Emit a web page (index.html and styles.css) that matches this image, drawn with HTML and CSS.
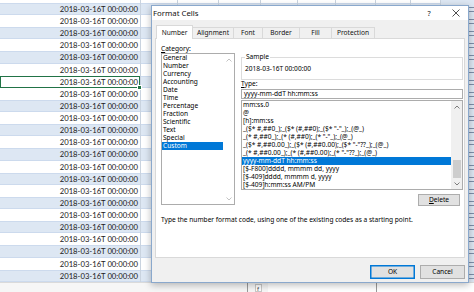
FILE: index.html
```html
<!DOCTYPE html>
<html>
<head>
<meta charset="utf-8">
<link rel="stylesheet" href="styles.css">
</head>
<body>
<div class="sheet">
  <div class="row"><div class="a"></div><div class="c w37"></div><div class="c w41"></div><div class="c w42"></div><div class="c w37"></div><div class="c w38"></div><div class="c w40"></div><div class="c w35"></div><div class="c w30"></div><div class="c last"></div></div>
  <div class="row"><div class="a">2018-03-16T 00:00:00</div><div class="c w37"></div><div class="c w41"></div><div class="c w42"></div><div class="c w37"></div><div class="c w38"></div><div class="c w40"></div><div class="c w35"></div><div class="c w30"></div><div class="c last"></div></div>
  <div class="row"><div class="a">2018-03-16T 00:00:00</div><div class="c w37"></div><div class="c w41"></div><div class="c w42"></div><div class="c w37"></div><div class="c w38"></div><div class="c w40"></div><div class="c w35"></div><div class="c w30"></div><div class="c last"></div></div>
  <div class="row"><div class="a">2018-03-16T 00:00:00</div><div class="c w37"></div><div class="c w41"></div><div class="c w42"></div><div class="c w37"></div><div class="c w38"></div><div class="c w40"></div><div class="c w35"></div><div class="c w30"></div><div class="c last"></div></div>
  <div class="row"><div class="a">2018-03-16T 00:00:00</div><div class="c w37"></div><div class="c w41"></div><div class="c w42"></div><div class="c w37"></div><div class="c w38"></div><div class="c w40"></div><div class="c w35"></div><div class="c w30"></div><div class="c last"></div></div>
  <div class="row"><div class="a">2018-03-16T 00:00:00</div><div class="c w37"></div><div class="c w41"></div><div class="c w42"></div><div class="c w37"></div><div class="c w38"></div><div class="c w40"></div><div class="c w35"></div><div class="c w30"></div><div class="c last"></div></div>
  <div class="row"><div class="a">2018-03-16T 00:00:00</div><div class="c w37"></div><div class="c w41"></div><div class="c w42"></div><div class="c w37"></div><div class="c w38"></div><div class="c w40"></div><div class="c w35"></div><div class="c w30"></div><div class="c last"></div></div>
  <div class="row active"><div class="a">2018-03-16T 00:00:00</div><div class="c w37"></div><div class="c w41"></div><div class="c w42"></div><div class="c w37"></div><div class="c w38"></div><div class="c w40"></div><div class="c w35"></div><div class="c w30"></div><div class="c last"></div></div>
  <div class="row"><div class="a">2018-03-16T 00:00:00</div><div class="c w37"></div><div class="c w41"></div><div class="c w42"></div><div class="c w37"></div><div class="c w38"></div><div class="c w40"></div><div class="c w35"></div><div class="c w30"></div><div class="c last"></div></div>
  <div class="row"><div class="a">2018-03-16T 00:00:00</div><div class="c w37"></div><div class="c w41"></div><div class="c w42"></div><div class="c w37"></div><div class="c w38"></div><div class="c w40"></div><div class="c w35"></div><div class="c w30"></div><div class="c last"></div></div>
  <div class="row"><div class="a">2018-03-16T 00:00:00</div><div class="c w37"></div><div class="c w41"></div><div class="c w42"></div><div class="c w37"></div><div class="c w38"></div><div class="c w40"></div><div class="c w35"></div><div class="c w30"></div><div class="c last"></div></div>
  <div class="row"><div class="a">2018-03-16T 00:00:00</div><div class="c w37"></div><div class="c w41"></div><div class="c w42"></div><div class="c w37"></div><div class="c w38"></div><div class="c w40"></div><div class="c w35"></div><div class="c w30"></div><div class="c last"></div></div>
  <div class="row"><div class="a">2018-03-16T 00:00:00</div><div class="c w37"></div><div class="c w41"></div><div class="c w42"></div><div class="c w37"></div><div class="c w38"></div><div class="c w40"></div><div class="c w35"></div><div class="c w30"></div><div class="c last"></div></div>
  <div class="row"><div class="a">2018-03-16T 00:00:00</div><div class="c w37"></div><div class="c w41"></div><div class="c w42"></div><div class="c w37"></div><div class="c w38"></div><div class="c w40"></div><div class="c w35"></div><div class="c w30"></div><div class="c last"></div></div>
  <div class="row"><div class="a">2018-03-16T 00:00:00</div><div class="c w37"></div><div class="c w41"></div><div class="c w42"></div><div class="c w37"></div><div class="c w38"></div><div class="c w40"></div><div class="c w35"></div><div class="c w30"></div><div class="c last"></div></div>
  <div class="row"><div class="a">2018-03-16T 00:00:00</div><div class="c w37"></div><div class="c w41"></div><div class="c w42"></div><div class="c w37"></div><div class="c w38"></div><div class="c w40"></div><div class="c w35"></div><div class="c w30"></div><div class="c last"></div></div>
  <div class="row"><div class="a">2018-03-16T 00:00:00</div><div class="c w37"></div><div class="c w41"></div><div class="c w42"></div><div class="c w37"></div><div class="c w38"></div><div class="c w40"></div><div class="c w35"></div><div class="c w30"></div><div class="c last"></div></div>
  <div class="row"><div class="a">2018-03-16T 00:00:00</div><div class="c w37"></div><div class="c w41"></div><div class="c w42"></div><div class="c w37"></div><div class="c w38"></div><div class="c w40"></div><div class="c w35"></div><div class="c w30"></div><div class="c last"></div></div>
  <div class="row"><div class="a">2018-03-16T 00:00:00</div><div class="c w37"></div><div class="c w41"></div><div class="c w42"></div><div class="c w37"></div><div class="c w38"></div><div class="c w40"></div><div class="c w35"></div><div class="c w30"></div><div class="c last"></div></div>
  <div class="row"><div class="a">2018-03-16T 00:00:00</div><div class="c w37"></div><div class="c w41"></div><div class="c w42"></div><div class="c w37"></div><div class="c w38"></div><div class="c w40"></div><div class="c w35"></div><div class="c w30"></div><div class="c last"></div></div>
  <div class="row"><div class="a">2018-03-16T 00:00:00</div><div class="c w37"></div><div class="c w41"></div><div class="c w42"></div><div class="c w37"></div><div class="c w38"></div><div class="c w40"></div><div class="c w35"></div><div class="c w30"></div><div class="c last"></div></div>
  <div class="row"><div class="a">2018-03-16T 00:00:00</div><div class="c w37"></div><div class="c w41"></div><div class="c w42"></div><div class="c w37"></div><div class="c w38"></div><div class="c w40"></div><div class="c w35"></div><div class="c w30"></div><div class="c last"></div></div>
  <div class="row"><div class="a">2018-03-16T 00:00:00</div><div class="c w37"></div><div class="c w41"></div><div class="c w42"></div><div class="c w37"></div><div class="c w38"></div><div class="c w40"></div><div class="c w35"></div><div class="c w30"></div><div class="c last"></div></div>
  <div class="row"><div class="a">2018-03-16T 00:00:00</div><div class="c w37"></div><div class="c w41"></div><div class="c w42"></div><div class="c w37"></div><div class="c w38"></div><div class="c w40"></div><div class="c w35"></div><div class="c w30"></div><div class="c last"></div></div>
  <div class="bottombar"><div class="bb-left"></div><div class="bb-tab"><span class="bb-box">f</span></div><div class="bb-mid"></div><div class="bb-right"></div></div>
</div>

<div class="dialog">
  <div class="titlebar">
    <span class="title">Format Cells</span>
    <span class="qmark">?</span>
    <span class="close"><svg width="8" height="8" viewBox="0 0 8 8"><path d="M0.5 0.5L7.5 7.5M7.5 0.5L0.5 7.5" stroke="#222" stroke-width="0.8" fill="none"/></svg></span>
  </div>
  <div class="body">
    <div class="tabs">
      <div class="tab active t-number">Number</div>
      <div class="tab t-align">Alignment</div>
      <div class="tab t-font">Font</div>
      <div class="tab t-border">Border</div>
      <div class="tab t-fill">Fill</div>
      <div class="tab t-prot">Protection</div>
    </div>
    <div class="panel">
      <div class="cols">
        <div class="leftcol">
          <div class="label"><u>C</u>ategory:</div>
          <div class="catlist">
            <div class="items">
              <div class="item">General</div>
              <div class="item">Number</div>
              <div class="item">Currency</div>
              <div class="item">Accounting</div>
              <div class="item">Date</div>
              <div class="item">Time</div>
              <div class="item">Percentage</div>
              <div class="item">Fraction</div>
              <div class="item">Scientific</div>
              <div class="item">Text</div>
              <div class="item">Special</div>
              <div class="item sel">Custom</div>
            </div>
            <div class="vscroll disabled">
              <div class="arrow"><svg width="6" height="4" viewBox="0 0 6 4"><path d="M0.5 3.5L3 1L5.5 3.5" stroke="#b4b4b4" stroke-width="0.8" fill="none"/></svg></div>
              <div class="track"></div>
              <div class="arrow"><svg width="6" height="4" viewBox="0 0 6 4"><path d="M0.5 0.5L3 3L5.5 0.5" stroke="#b4b4b4" stroke-width="0.8" fill="none"/></svg></div>
            </div>
          </div>
        </div>
        <div class="rightcol">
          <fieldset class="sample">
            <legend>Sample</legend>
            <div class="sample-val">2018-03-16T 00:00:00</div>
          </fieldset>
          <div class="label"><u>T</u>ype:</div>
          <div class="typeinput">yyyy-mm-ddT hh:mm:ss</div>
          <div class="fmtlist">
            <div class="items">
              <div class="item">mm:ss.0</div>
              <div class="item">@</div>
              <div class="item">[h]:mm:ss</div>
              <div class="item">_($* #,##0_);_($* (#,##0);_($* "-"_);_(@_)</div>
              <div class="item">_(* #,##0_);_(* (#,##0);_(* "-"_);_(@_)</div>
              <div class="item">_($* #,##0.00_);_($* (#,##0.00);_($* "-"??_);_(@_)</div>
              <div class="item">_(* #,##0.00_);_(* (#,##0.00);_(* "-"??_);_(@_)</div>
              <div class="item sel">yyyy-mm-ddT hh:mm:ss</div>
              <div class="item">[$-F800]dddd, mmmm dd, yyyy</div>
              <div class="item">[$-409]dddd, mmmm d, yyyy</div>
              <div class="item">[$-409]h:mm:ss AM/PM</div>
            </div>
            <div class="vscroll">
              <div class="arrow"><svg width="6" height="4" viewBox="0 0 6 4"><path d="M0.5 3.5L3 1L5.5 3.5" stroke="#606060" stroke-width="0.8" fill="none"/></svg></div>
              <div class="track"><div class="thumb"></div></div>
              <div class="arrow"><svg width="6" height="4" viewBox="0 0 6 4"><path d="M0.5 0.5L3 3L5.5 0.5" stroke="#606060" stroke-width="0.8" fill="none"/></svg></div>
            </div>
          </div>
          <div class="delrow"><div class="btn del"><u>D</u>elete</div></div>
        </div>
      </div>
      <div class="help">Type the number format code, using one of the existing codes as a starting point.</div>
    </div>
    <div class="footer">
      <div class="btn ok">OK</div>
      <div class="btn cancel">Cancel</div>
    </div>
  </div>
</div>
</body>
</html>
```

FILE: styles.css
```css
* { box-sizing: border-box; }
html, body { margin: 0; padding: 0; }
body {
  width: 474px;
  height: 292px;
  overflow: hidden;
  position: relative;
  background: #ffffff;
  font-family: "Lato", "Liberation Sans", sans-serif;
}

/* ---------- spreadsheet ---------- */
.sheet {
  display: flex;
  flex-direction: column;
  margin-top: -9.21px;
}
.row {
  display: flex;
  height: 12.14px;
  flex: none;
  background: #ffffff;
}
.row:nth-child(even) {
  background: #dde7f3;
  box-shadow: inset 0 1px 0 #ccdaed, inset 0 -1px 0 #ccdaed;
}
.a {
  width: 140px;
  flex: none;
  text-align: right;
  padding-right: 2px;
  font-size: 7.7px;
  line-height: 12.14px;
  color: #1a1a1a;
  white-space: nowrap;
}
.c {
  flex: none;
  border-left: 1px solid #c9d3df;
  height: 100%;
}
.w37 { width: 37px; }
.w41 { width: 41px; }
.w42 { width: 42px; }
.w38 { width: 38px; }
.w40 { width: 40px; }
.w35 { width: 35px; }
.w30 { width: 30px; }
.last {
  width: 40px;
  background: linear-gradient(#dde7f3 0 4px, #7d8ea8 4px 5px, #dde7f3 5px 8px, #7d8ea8 8px 9px, #dde7f3 9px);
}
.row.active .a {
  background: #ffffff;
  position: relative;
  outline: 1.5px solid #217346;
  outline-offset: -1.5px;
}
.row.active .a::after {
  content: "";
  position: absolute;
  right: -2px;
  bottom: -2px;
  width: 3px;
  height: 3px;
  background: #217346;
  border: 0.5px solid #fff;
}
.bottombar {
  height: 10px;
  flex: none;
  display: flex;
  background: #f6f6f6;
  border-top: 1px solid #dadada;
}
.bb-left { width: 248px; flex: none; border-right: 1px solid #9a9a9a; }
.bb-tab { width: 20px; flex: none; display: flex; justify-content: center; padding-top: 1px; }
.bb-box {
  font-size: 6px;
  line-height: 7px;
  width: 7px;
  text-align: center;
  border: 1px solid #c8c8c8;
  background: #fff;
  color: #444;
}
.bb-mid { width: 109px; flex: none; border-right: 1px solid #9a9a9a; background: #fff; }
.bb-right { flex: 1; background: #fff; }

/* ---------- dialog ---------- */
.dialog {
  position: absolute;
  left: 151px;
  top: 5px;
  width: 318px;
  height: 278px;
  border: 1px solid #8aa8cc;
  background: #f0f0f0;
  box-shadow: 0 2px 7px rgba(0,0,0,0.28);
  display: flex;
  flex-direction: column;
  font-family: "Noto Sans", "Open Sans", sans-serif;
  font-size: 6.6px;
  color: #000;
}
.titlebar {
  height: 14px;
  flex: none;
  background: #ffffff;
  display: flex;
  align-items: center;
  padding-left: 1px;
}
.title {
  flex: 1;
  font-size: 7.8px;
  color: #111;
}
.qmark {
  width: 14px;
  text-align: center;
  font-size: 7.4px;
  color: #222;
  margin-right: 8px;
}
.close {
  width: 24px;
  height: 14px;
  display: flex;
  align-items: center;
  justify-content: center;
}
.body {
  flex: 1;
  display: flex;
  flex-direction: column;
  padding: 5px 3px 0 3px;
}
.tabs {
  height: 13px;
  flex: none;
  display: flex;
  align-items: flex-end;
  margin-left: 1px;
  position: relative;
  z-index: 1;
}
.tab {
  height: 11px;
  line-height: 10px;
  text-align: center;
  border: 1px solid #d9d9d9;
  border-left: none;
  border-bottom: none;
  background: #f0f0f0;
  color: #111;
  white-space: nowrap;
}
.tab.active {
  height: 14px;
  margin-bottom: -1px;
  background: #ffffff;
  border-left: 1px solid #d9d9d9;
  line-height: 13px;
}
.t-number { width: 37px; }
.t-align { width: 41px; }
.t-font { width: 29px; }
.t-border { width: 37px; }
.t-fill { width: 32px; }
.t-prot { width: 43px; }

.panel {
  height: 220px;
  flex: none;
  background: #ffffff;
  border: 1px solid #d9d9d9;
  padding: 6px 0 0 5px;
  display: flex;
  flex-direction: column;
}
.cols {
  display: flex;
  gap: 6px;
}
.label {
  height: 8px;
  line-height: 8px;
  white-space: nowrap;
}
.leftcol {
  width: 74px;
  flex: none;
  display: flex;
  flex-direction: column;
}
.catlist {
  height: 152px;
  border: 1px solid #acacac;
  display: flex;
}
.items {
  flex: 1;
  min-width: 0;
  display: flex;
  flex-direction: column;
  overflow: hidden;
}
.item {
  height: 8px;
  line-height: 8px;
  padding-left: 1px;
  white-space: nowrap;
  flex: none;
}
.item.sel {
  background: #0078d7;
  color: #ffffff;
}
.vscroll {
  width: 11px;
  flex: none;
  display: flex;
  flex-direction: column;
  background: #f0f0f0;
}
.vscroll.disabled { background: #ffffff; }
.arrow {
  height: 11px;
  flex: none;
  display: flex;
  align-items: center;
  justify-content: center;
}
.track {
  flex: 1;
  display: flex;
  flex-direction: column;
  align-items: center;
}
.thumb {
  width: 8px;
  height: 18px;
  margin-top: 48px;
  background: #cdcdcd;
}

.rightcol {
  width: 222px;
  flex: none;
  display: flex;
  flex-direction: column;
  padding-top: 8px;
}
.sample {
  margin: 0;
  height: 27px;
  padding: 0 4px 0 3px;
  border: 1px solid #dcdcdc;
  min-width: 0;
}
.sample legend {
  padding: 0 1px;
  height: 8px;
  line-height: 8px;
  margin-left: 0;
}
.sample-val {
  margin-top: 4px;
  height: 8px;
  line-height: 8px;
  white-space: nowrap;
}
.typeinput {
  margin-top: 1px;
  height: 10px;
  line-height: 8px;
  border: 1px solid #acacac;
  padding-left: 2px;
  white-space: nowrap;
}
.fmtlist {
  margin-top: 1px;
  height: 90px;
  border: 1px solid #acacac;
  display: flex;
}
.delrow {
  margin-top: 4px;
  display: flex;
  justify-content: flex-end;
  padding-right: 3px;
}
.btn {
  height: 12px;
  line-height: 10px;
  text-align: center;
  background: #e1e1e1;
  border: 1px solid #adadad;
  color: #000;
}
.del { width: 42px; }
.help {
  margin-top: 10px;
  height: 8px;
  line-height: 8px;
  white-space: nowrap;
}
.footer {
  flex: 1;
  display: flex;
  justify-content: flex-end;
  gap: 5px;
  padding-top: 7px;
}
.footer .btn {
  width: 45px;
  height: 14px;
  line-height: 12px;
}
.ok {
  border: 1px solid #0078d7;
  box-shadow: inset 0 0 0 0.5px #0078d7;
}
```
